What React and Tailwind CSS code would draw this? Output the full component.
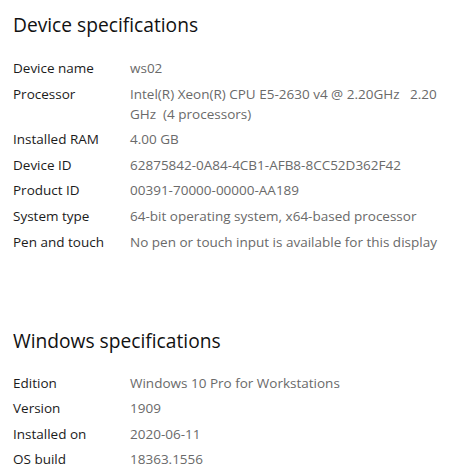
const device = [
  ["Device name", "ws02"],
  ["Processor", "Intel(R) Xeon(R) CPU E5-2630 v4 @ 2.20GHz   2.20\nGHz  (4 processors)"],
  ["Installed RAM", "4.00 GB"],
  ["Device ID", "62875842-0A84-4CB1-AFB8-8CC52D362F42"],
  ["Product ID", "00391-70000-00000-AA189"],
  ["System type", "64-bit operating system, x64-based processor"],
  ["Pen and touch", "No pen or touch input is available for this display"],
];

const windows = [
  ["Edition", "Windows 10 Pro for Workstations"],
  ["Version", "1909"],
  ["Installed on", "2020-06-11"],
  ["OS build", "18363.1556"],
];

function SpecRows({ rows }) {
  return (
    <div className="flex flex-col gap-[5.6px]">
      {rows.map(([label, value]) => (
        <div key={label} className="flex text-[13.5px] leading-[20px]">
          <div className="w-[117px] shrink-0 text-[#1b1b1b]">{label}</div>
          <div className="whitespace-pre text-[#6a6a6a]">{value}</div>
        </div>
      ))}
    </div>
  );
}

export default function App() {
  return (
    <div
      className="w-[474px] h-[475px] overflow-hidden bg-white pl-[13px]"
      style={{ fontFamily: '"Open Sans", "Noto Sans", sans-serif' }}
    >
      <h1 className="pt-[10px] text-[19.2px] leading-[30px] text-[#111]">Device specifications</h1>
      <div className="mt-[18px]">
        <SpecRows rows={device} />
      </div>
      <h1 className="mt-[74px] text-[19.2px] leading-[30px] text-[#111]">Windows specifications</h1>
      <div className="mt-[17px]">
        <SpecRows rows={windows} />
      </div>
    </div>
  );
}
